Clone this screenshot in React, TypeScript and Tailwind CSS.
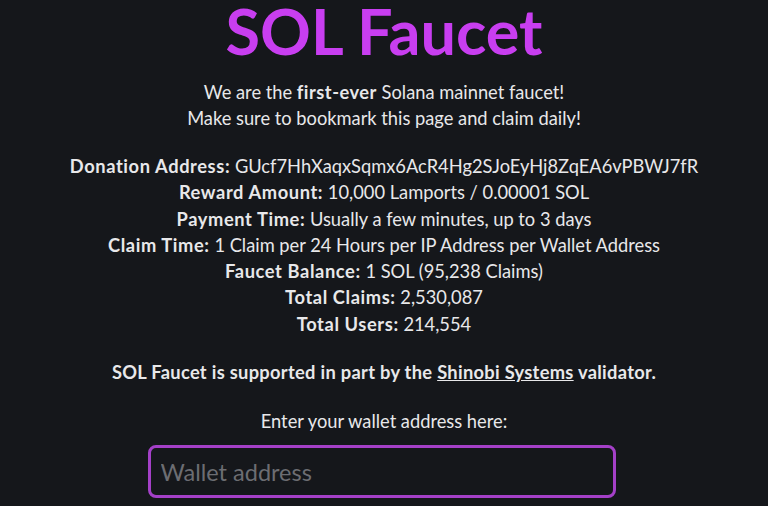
import React from "react";

// ─── Data ────────────────────────────────────────────────────────────────────

const STATS: { label: string; value: string }[] = [
  { label: "Donation Address:", value: "GUcf7HhXaqxSqmx6AcR4Hg2SJoEyHj8ZqEA6vPBWJ7fR" },
  { label: "Reward Amount:", value: "10,000 Lamports / 0.00001 SOL" },
  { label: "Payment Time:", value: "Usually a few minutes, up to 3 days" },
  { label: "Claim Time:", value: "1 Claim per 24 Hours per IP Address per Wallet Address" },
  { label: "Faucet Balance:", value: "1 SOL (95,238 Claims)" },
  { label: "Total Claims:", value: "2,530,087" },
  { label: "Total Users:", value: "214,554" },
];

// ─── Component ───────────────────────────────────────────────────────────────

export default function App() {
  return (
    <div className="min-h-[506px] w-full overflow-hidden bg-[#15171b] text-[#e8e8ea] font-['Lato',sans-serif] text-center">
      {/* Title */}
      <h1 className="pt-[1px] text-[63px] font-bold leading-[60px] text-[#c83ef0]">SOL Faucet</h1>

      {/* Intro */}
      <div className="mt-[18px] text-[18.3px] leading-[26px]">
        <p>
          We are the <b className="tracking-[0.5px]">first-ever</b> Solana mainnet faucet!
        </p>
        <p>Make sure to bookmark this page and claim daily!</p>
      </div>

      {/* Stats */}
      <div className="mt-[22px] text-[18.3px] leading-[26.3px]">
        {STATS.map((s) => (
          <p key={s.label}>
            <b className="tracking-[0.6px]">{s.label}</b> {s.value}
          </p>
        ))}
      </div>

      {/* Sponsor */}
      <p className="mt-[22px] text-[18.3px] font-bold leading-[26px] tracking-[0.3px]">
        SOL Faucet is supported in part by the{" "}
        <a className="underline">Shinobi Systems</a> validator.
      </p>

      {/* Wallet */}
      <p className="mt-[23px] text-[18.3px] leading-[26px]">Enter your wallet address here:</p>
      <div className="mt-[11px] flex justify-center pr-[5px]">
        <input
          placeholder="Wallet address"
          className="h-[53px] w-[468px] rounded-[8px] border-[3px] border-[#a440c8] bg-transparent px-[10px] text-[23.5px] text-[#e8e8ea] outline-none placeholder:text-[#6c6d72]"
        />
      </div>
    </div>
  );
}
